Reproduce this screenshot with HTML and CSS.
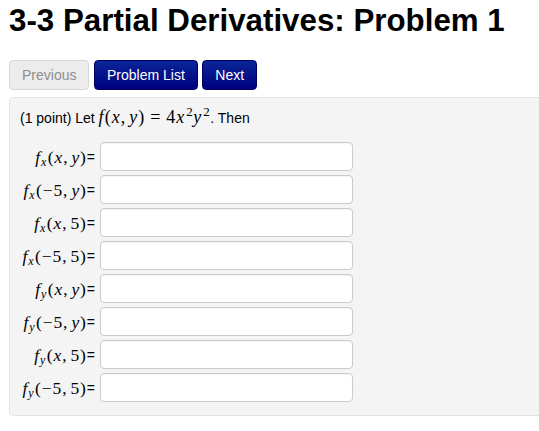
FILE: index.html
```html
<!DOCTYPE html>
<html>
<head>
<meta charset="utf-8">
<link rel="stylesheet" href="styles.css">
</head>
<body>
<div class="page">
  <h1 class="title">3-3 Partial Derivatives: Problem 1</h1>
  <div class="nav">
    <span class="btn btn-disabled">Previous</span>
    <span class="btn btn-primary">Problem List</span>
    <span class="btn btn-primary">Next</span>
  </div>
  <div class="well">
    <div class="stmt">(1 point) Let <span class="m big"><i>f</i>(<i>x</i>,<span class="th"></span><i>y</i>)<span class="eq">=</span>4<i>x</i><sup>2</sup><i>y</i><sup>2</sup></span>. Then</div>
    <div class="answers">
      <label class="lbl"><span class="m"><i>f</i><sub><i>x</i></sub>(<i>x</i>,<span class="th"></span><i>y</i>)</span>=</label><span class="inp"></span>
      <label class="lbl"><span class="m"><i>f</i><sub><i>x</i></sub>(−5,<span class="th"></span><i>y</i>)</span>=</label><span class="inp"></span>
      <label class="lbl"><span class="m"><i>f</i><sub><i>x</i></sub>(<i>x</i>,<span class="th"></span>5)</span>=</label><span class="inp"></span>
      <label class="lbl"><span class="m"><i>f</i><sub><i>x</i></sub>(−5,<span class="th"></span>5)</span>=</label><span class="inp"></span>
      <label class="lbl"><span class="m"><i>f</i><sub><i>y</i></sub>(<i>x</i>,<span class="th"></span><i>y</i>)</span>=</label><span class="inp"></span>
      <label class="lbl"><span class="m"><i>f</i><sub><i>y</i></sub>(−5,<span class="th"></span><i>y</i>)</span>=</label><span class="inp"></span>
      <label class="lbl"><span class="m"><i>f</i><sub><i>y</i></sub>(<i>x</i>,<span class="th"></span>5)</span>=</label><span class="inp"></span>
      <label class="lbl"><span class="m"><i>f</i><sub><i>y</i></sub>(−5,<span class="th"></span>5)</span>=</label><span class="inp"></span>
    </div>
  </div>
</div>
</body>
</html>
```

FILE: styles.css
```css
html, body {
  margin: 0;
  padding: 0;
  background: #fff;
  overflow: hidden;
}
body {
  font-family: "Liberation Sans", Arial, sans-serif;
  font-size: 14px;
  color: #000;
}
.page {
  padding-left: 9px;
}
.title {
  margin: 3px 0 0 0;
  font-size: 31.3px;
  line-height: 36px;
  font-weight: bold;
  color: #000;
}
.nav {
  margin-top: 21px;
  display: flex;
  gap: 4.5px;
  height: 30px;
}
.btn {
  display: inline-block;
  box-sizing: border-box;
  height: 30px;
  padding: 4px 12px;
  line-height: 20px;
  font-size: 14px;
  border-radius: 4px;
  border: 1px solid;
}
.btn-disabled {
  color: #8e8e8e;
  background: #ececec;
  border-color: #d6d6d6;
}
.btn-primary {
  color: #fff;
  background: linear-gradient(#0b2598, #00007e);
  border-color: #00005e;
}
.well {
  margin-top: 7px;
  width: 600px;
  padding: 10px 10px 13px 10px;
  border: 1px solid #e3e3e3;
  border-radius: 4px;
  background: #f4f4f4;
}
.stmt {
  height: 20px;
  line-height: 20px;
  font-size: 14px;
  white-space: nowrap;
}
.m {
  font-family: "Liberation Serif", "Times New Roman", serif;
  font-size: 17.5px;
  letter-spacing: 0.9px;
  line-height: 0;
}
.m.big {
  font-size: 18px;
  letter-spacing: 1px;
}
.m i {
  font-style: italic;
}
.m sup {
  font-size: 13px;
  line-height: 0;
  vertical-align: 7px;
  letter-spacing: 0.5px;
  padding-left: 1px;
}
.m sub {
  font-size: 12px;
  line-height: 0;
  vertical-align: -3px;
  letter-spacing: 0.5px;
  padding-right: 1px;
}
.th {
  display: inline-block;
  width: 3px;
}
.eq {
  padding: 0 5px;
}
.answers {
  margin-top: 14px;
  display: grid;
  grid-template-columns: 80px 253px;
  grid-auto-rows: 29px;
  row-gap: 4px;
}
.lbl {
  display: flex;
  align-items: center;
  justify-content: flex-end;
  padding-right: 5px;
  font-size: 14px;
  white-space: nowrap;
}
.lbl .m {
  line-height: 20px;
}
.inp {
  display: block;
  box-sizing: border-box;
  height: 29px;
  background: #fff;
  border: 1px solid #cbcbcb;
  border-radius: 4px;
  box-shadow: inset 0 1px 1px rgba(0,0,0,0.05);
}
```
